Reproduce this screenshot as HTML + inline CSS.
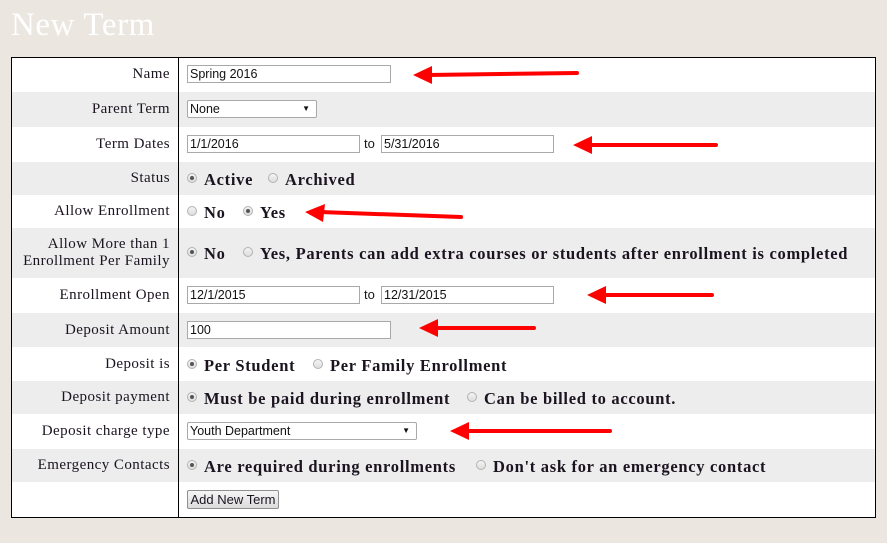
<!DOCTYPE html>
<html><head><meta charset="utf-8">
<style>
html,body{margin:0;padding:0}
body{width:887px;height:543px;position:relative;overflow:hidden;background:#ebe6e0;font-family:"Liberation Serif",serif;color:#1b1420}
h1{position:absolute;left:11px;top:7px;margin:0;font-weight:normal;font-size:33px;color:#fff;letter-spacing:0.6px}
.tbl{position:absolute;left:11px;top:57px;width:863px;height:459px;border:1px solid #000;background:#fff}
.vl{position:absolute;left:178px;top:57px;width:1px;height:460px;background:#000}
.row{position:absolute;left:12px;width:863px}
.g{background:#ededed}
.lb{position:absolute;right:717px;font-size:15px;letter-spacing:0.45px;text-align:right;white-space:nowrap;line-height:17px}
.in{position:absolute;height:18px;border:1px solid #a9a9a9;background:#fff;font-family:"Liberation Sans",sans-serif;font-size:12.5px;line-height:16px;padding-left:2px;box-sizing:border-box;color:#111}
.sel{border-radius:2px}
.sel:after{content:"▼";position:absolute;right:6px;top:0;font-size:8px}
.r{position:absolute;width:10px;height:10px;border-radius:50%;border:1px solid #b3b3b3;background:linear-gradient(#f4f4f4,#ddd);box-sizing:border-box}
.r.on:after{content:"";position:absolute;left:2px;top:2px;width:4px;height:4px;border-radius:50%;background:#555}
.t{position:absolute;font-weight:bold;font-size:16.5px;letter-spacing:0.7px;white-space:nowrap;line-height:17px}
.to{position:absolute;font-family:"Liberation Sans",sans-serif;font-size:13px;line-height:18px}
.btn{position:absolute;left:187px;top:490px;width:92px;height:19px;border:1px solid #8f8f8f;border-radius:2px;background:linear-gradient(#f5f5f5,#dcdcdc);font-family:"Liberation Sans",sans-serif;font-size:13px;line-height:18px;text-align:center;box-sizing:border-box}
</style></head><body>
<h1>New Term</h1>
<div class="tbl"></div>
<div class="row g" style="top:92px;height:35px"></div>
<div class="row g" style="top:162px;height:33px"></div>
<div class="row g" style="top:228px;height:50px"></div>
<div class="row g" style="top:313px;height:34px"></div>
<div class="row g" style="top:381px;height:33px"></div>
<div class="row g" style="top:449px;height:33px"></div>
<div class="vl"></div>

<div class="lb" style="top:66px">Name</div>
<div class="lb" style="top:101px">Parent Term</div>
<div class="lb" style="top:136px">Term Dates</div>
<div class="lb" style="top:170px">Status</div>
<div class="lb" style="top:203px">Allow Enrollment</div>
<div class="lb" style="top:236px;line-height:17px">Allow More than 1<br>Enrollment Per Family</div>
<div class="lb" style="top:287px">Enrollment Open</div>
<div class="lb" style="top:322px">Deposit Amount</div>
<div class="lb" style="top:356px">Deposit is</div>
<div class="lb" style="top:389px">Deposit payment</div>
<div class="lb" style="top:423px">Deposit charge type</div>
<div class="lb" style="top:457px">Emergency Contacts</div>

<div class="in" style="left:187px;top:65px;width:204px">Spring 2016</div>
<div class="in sel" style="left:187px;top:100px;width:130px">None</div>
<div class="in" style="left:187px;top:135px;width:173px">1/1/2016</div>
<div class="to" style="left:364px;top:135px">to</div>
<div class="in" style="left:381px;top:135px;width:173px">5/31/2016</div>

<div class="r on" style="left:187px;top:173px"></div><div class="t" style="left:204px;top:171px">Active</div>
<div class="r" style="left:268px;top:173px"></div><div class="t" style="left:285px;top:171px">Archived</div>

<div class="r" style="left:187px;top:206px"></div><div class="t" style="left:204px;top:204px">No</div>
<div class="r on" style="left:243px;top:206px"></div><div class="t" style="left:260px;top:204px">Yes</div>

<div class="r on" style="left:187px;top:247px"></div><div class="t" style="left:204px;top:245px">No</div>
<div class="r" style="left:243px;top:247px"></div><div class="t" style="left:260px;top:245px">Yes, Parents can add extra courses or students after enrollment is completed</div>

<div class="in" style="left:187px;top:286px;width:173px">12/1/2015</div>
<div class="to" style="left:364px;top:286px">to</div>
<div class="in" style="left:381px;top:286px;width:173px">12/31/2015</div>

<div class="in" style="left:187px;top:321px;width:204px">100</div>

<div class="r on" style="left:187px;top:359px"></div><div class="t" style="left:204px;top:357px">Per Student</div>
<div class="r" style="left:313px;top:359px"></div><div class="t" style="left:330px;top:357px">Per Family Enrollment</div>

<div class="r on" style="left:187px;top:392px"></div><div class="t" style="left:204px;top:390px">Must be paid during enrollment</div>
<div class="r" style="left:467px;top:392px"></div><div class="t" style="left:484px;top:390px">Can be billed to account.</div>

<div class="in sel" style="left:187px;top:422px;width:230px">Youth Department</div>

<div class="r on" style="left:187px;top:460px"></div><div class="t" style="left:204px;top:458px">Are required during enrollments</div>
<div class="r" style="left:476px;top:460px"></div><div class="t" style="left:493px;top:458px">Don't ask for an emergency contact</div>

<div class="btn">Add New Term</div>

<svg style="position:absolute;left:0;top:0" width="887" height="543">
<g stroke="#f00" stroke-width="4" stroke-linecap="round" fill="#f00">
<line x1="577" y1="73" x2="428" y2="75"/><polygon stroke="none" points="413,75 432,66 432,84"/>
<line x1="716" y1="145" x2="588" y2="145"/><polygon stroke="none" points="573,145 592,136 592,154"/>
<line x1="461" y1="217" x2="320" y2="212"/><polygon stroke="none" points="305,212 325,204 323,222"/>
<line x1="712" y1="295" x2="602" y2="295"/><polygon stroke="none" points="587,295 606,286 606,304"/>
<line x1="534" y1="328" x2="434" y2="328"/><polygon stroke="none" points="419,328 438,319 438,337"/>
<line x1="610" y1="431" x2="465" y2="431"/><polygon stroke="none" points="450,431 469,422 469,440"/>
</g></svg>
</body></html>
